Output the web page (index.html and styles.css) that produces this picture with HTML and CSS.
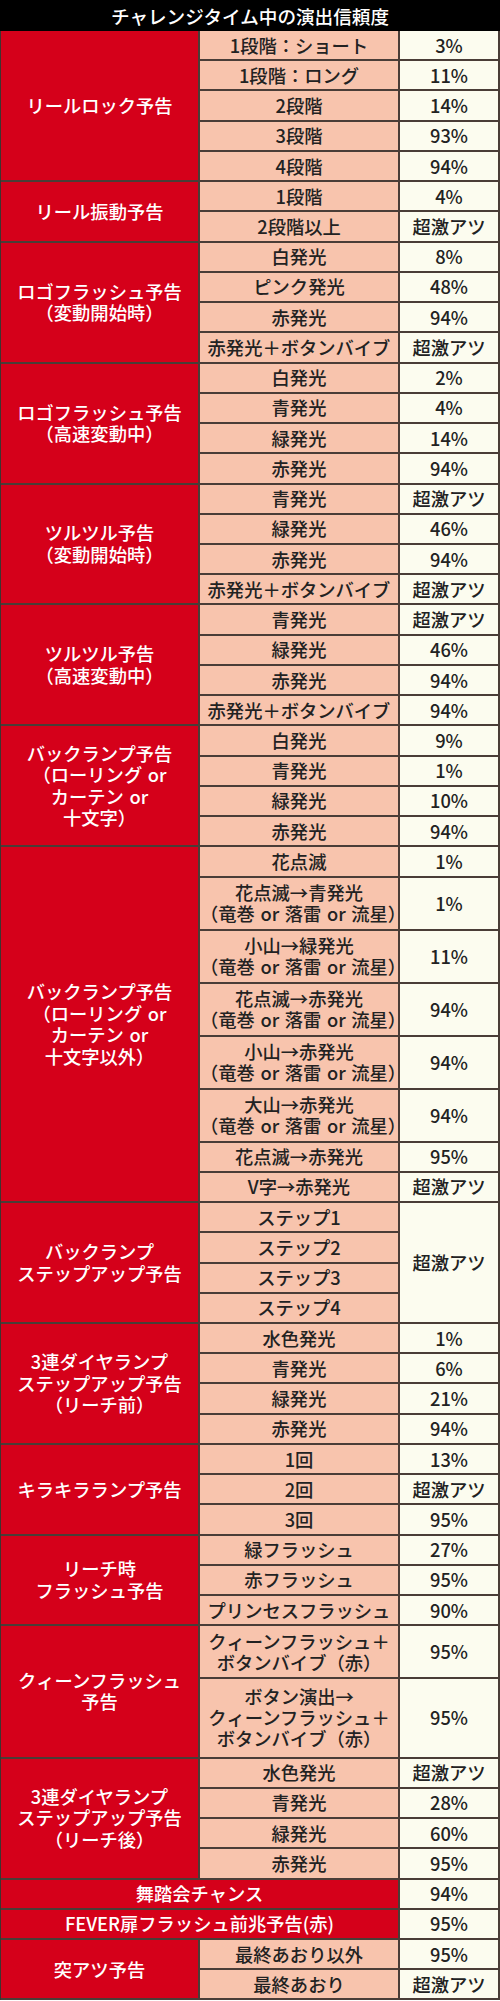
FILE: index.html
```html
<!DOCTYPE html>
<html lang="ja">
<head>
<meta charset="utf-8">
<title>チャレンジタイム中の演出信頼度</title>
<link rel="stylesheet" href="styles.css">
</head>
<body>
<div class="title">チャレンジタイム中の演出信頼度</div>
<table class="tbl">
<colgroup><col class="c1"><col class="c2"><col class="c3"></colgroup>
<tbody>
<tr class="s"><th rowspan="5">リールロック予告</th><td class="n">1段階：ショート</td><td class="v">3%</td></tr>
<tr class="s"><td class="n">1段階：ロング</td><td class="v">11%</td></tr>
<tr class="s"><td class="n">2段階</td><td class="v">14%</td></tr>
<tr class="s"><td class="n">3段階</td><td class="v">93%</td></tr>
<tr class="s"><td class="n">4段階</td><td class="v">94%</td></tr>

<tr class="s"><th rowspan="2">リール振動予告</th><td class="n">1段階</td><td class="v">4%</td></tr>
<tr class="s"><td class="n">2段階以上</td><td class="v">超激アツ</td></tr>

<tr class="s"><th rowspan="4">ロゴフラッシュ予告<br>（変動開始時）</th><td class="n">白発光</td><td class="v">8%</td></tr>
<tr class="s"><td class="n">ピンク発光</td><td class="v">48%</td></tr>
<tr class="s"><td class="n">赤発光</td><td class="v">94%</td></tr>
<tr class="s"><td class="n">赤発光＋ボタンバイブ</td><td class="v">超激アツ</td></tr>

<tr class="s"><th rowspan="4">ロゴフラッシュ予告<br>（高速変動中）</th><td class="n">白発光</td><td class="v">2%</td></tr>
<tr class="s"><td class="n">青発光</td><td class="v">4%</td></tr>
<tr class="s"><td class="n">緑発光</td><td class="v">14%</td></tr>
<tr class="s"><td class="n">赤発光</td><td class="v">94%</td></tr>

<tr class="s"><th rowspan="4">ツルツル予告<br>（変動開始時）</th><td class="n">青発光</td><td class="v">超激アツ</td></tr>
<tr class="s"><td class="n">緑発光</td><td class="v">46%</td></tr>
<tr class="s"><td class="n">赤発光</td><td class="v">94%</td></tr>
<tr class="s"><td class="n">赤発光＋ボタンバイブ</td><td class="v">超激アツ</td></tr>

<tr class="s"><th rowspan="4">ツルツル予告<br>（高速変動中）</th><td class="n">青発光</td><td class="v">超激アツ</td></tr>
<tr class="s"><td class="n">緑発光</td><td class="v">46%</td></tr>
<tr class="s"><td class="n">赤発光</td><td class="v">94%</td></tr>
<tr class="s"><td class="n">赤発光＋ボタンバイブ</td><td class="v">94%</td></tr>

<tr class="s"><th rowspan="4">バックランプ予告<br>（ローリング or<br>カーテン or<br>十文字）</th><td class="n">白発光</td><td class="v">9%</td></tr>
<tr class="s"><td class="n">青発光</td><td class="v">1%</td></tr>
<tr class="s"><td class="n">緑発光</td><td class="v">10%</td></tr>
<tr class="s"><td class="n">赤発光</td><td class="v">94%</td></tr>

<tr class="s"><th rowspan="8">バックランプ予告<br>（ローリング or<br>カーテン or<br>十文字以外）</th><td class="n">花点滅</td><td class="v">1%</td></tr>
<tr class="d"><td class="n">花点滅→青発光<br>（竜巻 or 落雷 or 流星）</td><td class="v">1%</td></tr>
<tr class="d"><td class="n">小山→緑発光<br>（竜巻 or 落雷 or 流星）</td><td class="v">11%</td></tr>
<tr class="d"><td class="n">花点滅→赤発光<br>（竜巻 or 落雷 or 流星）</td><td class="v">94%</td></tr>
<tr class="d"><td class="n">小山→赤発光<br>（竜巻 or 落雷 or 流星）</td><td class="v">94%</td></tr>
<tr class="d"><td class="n">大山→赤発光<br>（竜巻 or 落雷 or 流星）</td><td class="v">94%</td></tr>
<tr class="s"><td class="n">花点滅→赤発光</td><td class="v">95%</td></tr>
<tr class="s"><td class="n">V字→赤発光</td><td class="v">超激アツ</td></tr>

<tr class="s"><th rowspan="4">バックランプ<br>ステップアップ予告</th><td class="n">ステップ1</td><td class="v" rowspan="4">超激アツ</td></tr>
<tr class="s"><td class="n">ステップ2</td></tr>
<tr class="s"><td class="n">ステップ3</td></tr>
<tr class="s"><td class="n">ステップ4</td></tr>

<tr class="s"><th rowspan="4">3連ダイヤランプ<br>ステップアップ予告<br>（リーチ前）</th><td class="n">水色発光</td><td class="v">1%</td></tr>
<tr class="s"><td class="n">青発光</td><td class="v">6%</td></tr>
<tr class="s"><td class="n">緑発光</td><td class="v">21%</td></tr>
<tr class="s"><td class="n">赤発光</td><td class="v">94%</td></tr>

<tr class="s"><th rowspan="3">キラキラランプ予告</th><td class="n">1回</td><td class="v">13%</td></tr>
<tr class="s"><td class="n">2回</td><td class="v">超激アツ</td></tr>
<tr class="s"><td class="n">3回</td><td class="v">95%</td></tr>

<tr class="s"><th rowspan="3">リーチ時<br>フラッシュ予告</th><td class="n">緑フラッシュ</td><td class="v">27%</td></tr>
<tr class="s"><td class="n">赤フラッシュ</td><td class="v">95%</td></tr>
<tr class="s"><td class="n">プリンセスフラッシュ</td><td class="v">90%</td></tr>

<tr class="d"><th rowspan="2">クィーンフラッシュ<br>予告</th><td class="n">クィーンフラッシュ＋<br>ボタンバイブ（赤）</td><td class="v">95%</td></tr>
<tr class="t"><td class="n">ボタン演出→<br>クィーンフラッシュ＋<br>ボタンバイブ（赤）</td><td class="v">95%</td></tr>

<tr class="s"><th rowspan="4">3連ダイヤランプ<br>ステップアップ予告<br>（リーチ後）</th><td class="n">水色発光</td><td class="v">超激アツ</td></tr>
<tr class="s"><td class="n">青発光</td><td class="v">28%</td></tr>
<tr class="s"><td class="n">緑発光</td><td class="v">60%</td></tr>
<tr class="s"><td class="n">赤発光</td><td class="v">95%</td></tr>

<tr class="s"><th colspan="2">舞踏会チャンス</th><td class="v">94%</td></tr>
<tr class="s"><th colspan="2">FEVER扉フラッシュ前兆予告(赤)</th><td class="v">95%</td></tr>

<tr class="s"><th rowspan="2">突アツ予告</th><td class="n">最終あおり以外</td><td class="v">95%</td></tr>
<tr class="s"><td class="n">最終あおり</td><td class="v">超激アツ</td></tr>
</tbody>
</table>
</body>
</html>
```

FILE: styles.css
```css
html, body {
  margin: 0;
  padding: 0;
  background: #ffffff;
}

body {
  width: 500px;
  font-family: "Noto Sans CJK JP", "Noto Sans", sans-serif;
  font-weight: 500;
  font-size: 18.3px;
  color: #222222;
}

.title {
  height: 31px;
  background: #000000;
  color: #ffffff;
  text-align: center;
  font-size: 18.6px;
  line-height: 31px;
}

.tbl {
  width: 500px;
  table-layout: fixed;
  border-collapse: separate;
  border-spacing: 0;
  border-left: 1px solid #3e3430;
}

.c1 { width: 199px; }
.c2 { width: 200px; }
.c3 { width: 100px; }

.tbl th,
.tbl td {
  padding: 0;
  text-align: center;
  vertical-align: middle;
  border-right: 2px solid #4a3d37;
  border-bottom: 2px solid #4a3d37;
  line-height: 21px;
  white-space: nowrap;
  word-spacing: 1.5px;
}

.tbl th {
  background: #d5001a;
  color: #ffffff;
  font-weight: 500;
  line-height: 21.5px;
}

.tbl td.n {
  background: #f8c4ad;
}

.tbl td.v {
  background: #fcfcef;
}

tr.s { height: 30.24px; }
tr.d { height: 53px; }
tr.t { height: 79.3px; }
```
